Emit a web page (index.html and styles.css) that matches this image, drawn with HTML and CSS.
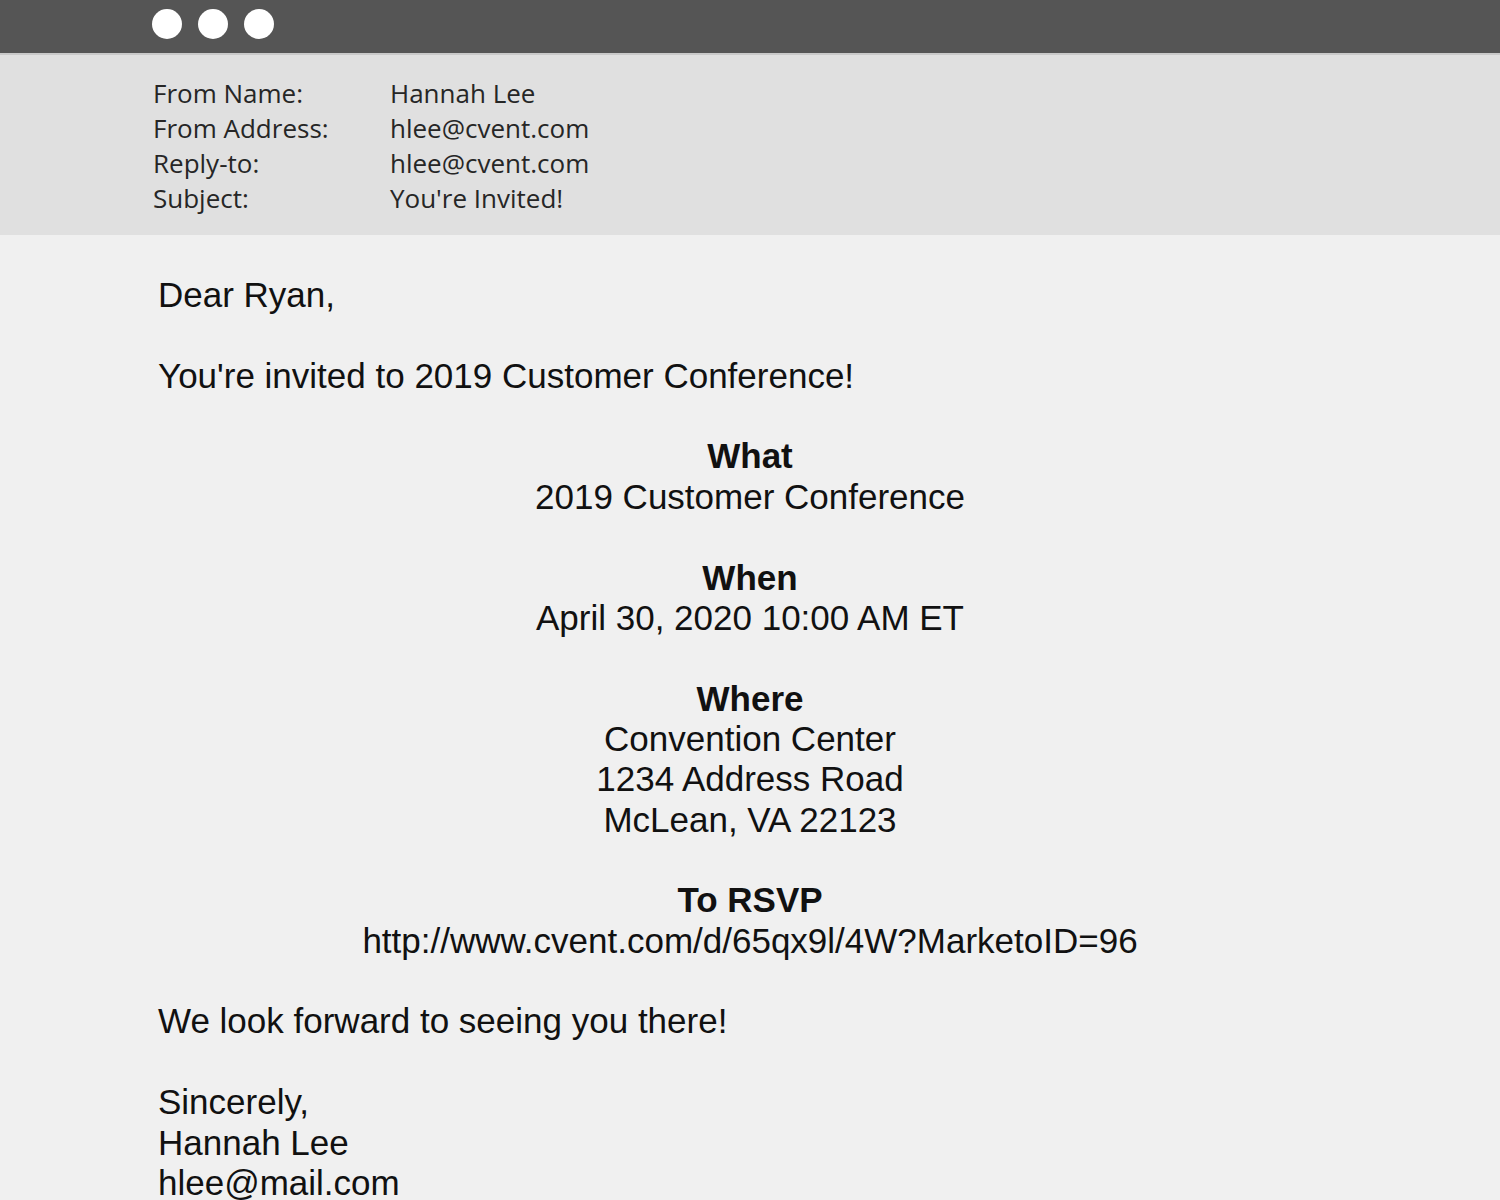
FILE: index.html
```html
<!DOCTYPE html>
<html>
<head>
<meta charset="utf-8">
<link rel="stylesheet" href="styles.css">
</head>
<body>
<div class="window">
  <div class="titlebar">
    <span class="dot"></span><span class="dot"></span><span class="dot"></span>
  </div>
  <div class="headers">
    <div class="hrow"><span class="label">From Name:</span><span class="value">Hannah Lee</span></div>
    <div class="hrow"><span class="label">From Address:</span><span class="value">hlee@cvent.com</span></div>
    <div class="hrow"><span class="label">Reply-to:</span><span class="value">hlee@cvent.com</span></div>
    <div class="hrow"><span class="label">Subject:</span><span class="value">You're Invited!</span></div>
  </div>
  <div class="body">
    <p class="line">Dear Ryan,</p>
    <p class="line gap">You're invited to 2019 Customer Conference!</p>
    <div class="center gap">
      <p class="line bold">What</p>
      <p class="line">2019 Customer Conference</p>
    </div>
    <div class="center gap">
      <p class="line bold">When</p>
      <p class="line">April 30, 2020 10:00 AM ET</p>
    </div>
    <div class="center gap">
      <p class="line bold">Where</p>
      <p class="line">Convention Center</p>
      <p class="line">1234 Address Road</p>
      <p class="line">McLean, VA 22123</p>
    </div>
    <div class="center gap">
      <p class="line bold">To RSVP</p>
      <p class="line">http://www.cvent.com/d/65qx9l/4W?MarketoID=96</p>
    </div>
    <p class="line gap">We look forward to seeing you there!</p>
    <div class="gap">
      <p class="line">Sincerely,</p>
      <p class="line">Hannah Lee</p>
      <p class="line">hlee@mail.com</p>
    </div>
  </div>
</div>
</body>
</html>
```
FILE: styles.css
```css
html, body {
  margin: 0;
  padding: 0;
  background: #f0f0f0;
}
.window {
  width: 1500px;
  height: 1200px;
  overflow: hidden;
  background: #f0f0f0;
}
.titlebar {
  height: 55px;
  background: #555555;
  border-bottom: 2px solid #c9c9c9;
  display: flex;
  align-items: center;
  gap: 16px;
  padding-left: 152px;
  box-sizing: border-box;
}
.dot {
  width: 30px;
  height: 30px;
  border-radius: 50%;
  background: #ffffff;
  margin-top: -5px;
}
.headers {
  background: #e0e0e0;
  height: 180px;
  box-sizing: border-box;
  padding: 21px 0 0 153px;
  font-family: "Open Sans", "DejaVu Sans", sans-serif;
  font-size: 26px;
  line-height: 35px;
  color: #262626;
}
.hrow {
  display: flex;
}
.label {
  width: 237px;
}
.body {
  padding: 40px 0 0 158px;
  font-family: "Liberation Sans", Arial, sans-serif;
  font-size: 35px;
  line-height: 40.36px;
  color: #111111;
}
.line {
  margin: 0;
  white-space: nowrap;
}
.gap {
  margin-top: 40.36px;
}
.center {
  text-align: center;
  width: 1184px;
}
.bold {
  font-weight: bold;
}
```
